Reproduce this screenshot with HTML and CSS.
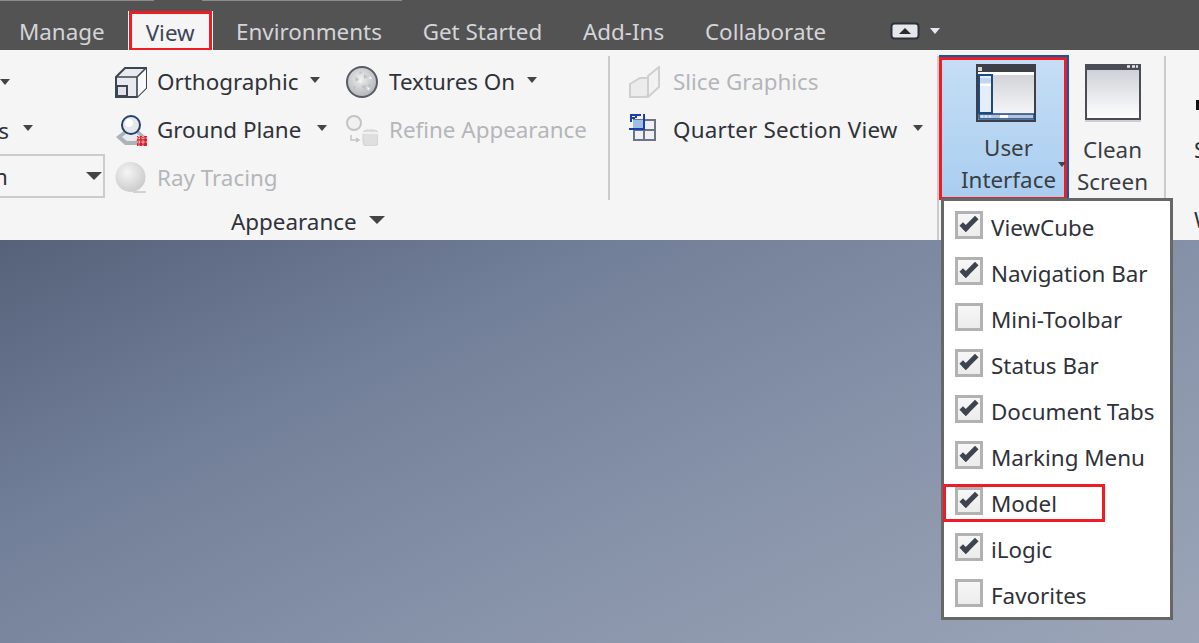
FILE: index.html
```html
<!DOCTYPE html>
<html lang="en">
<head>
<meta charset="utf-8">
<title>User Interface menu</title>
<link rel="stylesheet" href="styles.css">
</head>
<body>
<div class="app">
  <nav class="tabs">
    <span class="tab">Manage</span>
    <span class="tab tab-active">View</span>
    <span class="tab">Environments</span>
    <span class="tab">Get Started</span>
    <span class="tab">Add-Ins</span>
    <span class="tab">Collaborate</span>
    <span class="tab-tool">
      <svg class="pill" viewBox="0 0 30 18"><rect x="1.5" y="1.5" width="27" height="15" rx="3" fill="#e4e6ea" stroke="#2c3038" stroke-width="2"/><path d="M9 12 L15 6 L21 12Z" fill="#2a2a2a"/></svg>
      <i class="arrow arrow-light"></i>
    </span>
  </nav>
  <div class="ribbon">
    <section class="panel-left">
      <div class="clip-row"><i class="arrow"></i></div>
      <div class="clip-row"><span class="label">s</span><i class="arrow arrow-s"></i></div>
      <div class="combo"><span class="label">n</span><i class="arrow arrow-lg"></i></div>
    </section>
    <section class="panel-app">
      <div class="cols">
        <div class="col col-a">
          <div class="row">
            <svg class="ico" viewBox="0 0 32 32"><path d="M1 11 L10 2 H31 V22 L22 31 H1Z" fill="#e8eaee" stroke="#3c4552" stroke-width="2"/><path d="M22 11 L31 2 V22 L22 31Z" fill="#fafafa"/><path d="M1 11 H22 V31 M22 11 L31 2" fill="none" stroke="#3c4552" stroke-width="1.6"/><rect x="2" y="20" width="10" height="10" fill="#dfe2e8" stroke="#3c4552" stroke-width="2"/></svg>
            <span class="label">Orthographic</span><i class="arrow arrow-r"></i>
          </div>
          <div class="row">
            <svg class="ico" viewBox="0 0 32 32"><path d="M1 23 L10 16 H23 L31 23 L22 31 H10Z" fill="#aeb3bb"/><path d="M7 23 L12 19 H21 L26 23 L20 27 H12Z" fill="#e8eaee"/><circle cx="16" cy="11" r="9" fill="#e6e8ec" stroke="#27406e" stroke-width="2"/><circle cx="14" cy="9" r="4" fill="#fff"/><rect x="22" y="22" width="10" height="10" fill="#d8212c"/><path d="M22 24h10M22 28h10M24 22v10M28 22v10" stroke="#fff" stroke-dasharray="1 1.2" stroke-width="1.2"/></svg>
            <span class="label">Ground Plane</span><i class="arrow arrow-r2"></i>
          </div>
          <div class="row">
            <svg class="ico" viewBox="0 0 32 32"><defs><radialGradient id="gl" cx=".4" cy=".35" r=".7"><stop offset="0" stop-color="#f5f5f5"/><stop offset="1" stop-color="#c9c9c9"/></radialGradient></defs><circle cx="15.500" cy="15" r="15" fill="url(#gl)"/><path d="M18 30 H31" stroke="#d2d2d2" stroke-width="2"/></svg>
            <span class="label muted">Ray Tracing</span>
          </div>
        </div>
        <div class="col col-b">
          <div class="row">
            <svg class="ico" viewBox="0 0 32 32"><defs><radialGradient id="tx" cx=".45" cy=".4" r=".7"><stop offset="0" stop-color="#efefef"/><stop offset="1" stop-color="#a9abb0"/></radialGradient></defs><circle cx="16" cy="16" r="15" fill="url(#tx)" stroke="#565b66" stroke-width="2"/><path d="M9 11l4 2-3 3zM18 8l4 3-4 2zM15 20l5-1-1 5zM23 17l2 3-3 1zM7 20l3 1-2 3zM14 5l2 2-3 1z" fill="#bfc0c4"/><path d="M12 16l3-2 1 3zM21 21l3 1-2 3zM24 10l2 3-3 0z" fill="#f7f7f7"/></svg>
            <span class="label">Textures On</span><i class="arrow arrow-r3"></i>
          </div>
          <div class="row">
            <svg class="ico" viewBox="0 0 32 32"><circle cx="8" cy="9" r="7" fill="#f1f1f1" stroke="#c4c4c4" stroke-width="2"/><path d="M5 21 v5 h8 M10 24 l3 2 -3 2" fill="none" stroke="#c4c4c4" stroke-width="1.500"/><rect x="17" y="16" width="15" height="16" rx="4" fill="#dfdfdf" stroke="#d0d0d0"/><path d="M17 19 h15" stroke="#f0f0f0" stroke-width="2"/></svg>
            <span class="label muted">Refine Appearance</span>
          </div>
        </div>
      </div>
      <div class="panel-title"><span class="label">Appearance</span><i class="arrow arrow-lg arrow-title"></i></div>
    </section>
    <div class="sep sep-short"></div>
    <section class="panel-sec">
      <div class="row">
        <svg class="ico" viewBox="0 0 32 32"><path d="M1 18 L11 12 H24 V25 L17 31 H1Z" fill="#ececec" stroke="#cfcfcf" stroke-width="2"/><path d="M19 10 L30 1 V21 L19 31Z" fill="#f2f2f2" stroke="#cfcfcf" stroke-width="2"/></svg>
        <span class="label muted">Slice Graphics</span>
      </div>
      <div class="row">
        <svg class="ico" viewBox="0 0 32 32"><path d="M5 6 H26 V26 H5Z M15 6 V26 M5 16 H26" fill="#eef0f3" stroke="#6c7482" stroke-width="2"/><rect x="4" y="6" width="11" height="10" fill="#9dbfe6"/><path d="M1 1 H12 M7 0 V4 M15 0 V15 M0 15 H16 M2 1 V8 M2 4 H6" fill="none" stroke="#1a3fa8" stroke-width="2"/></svg>
        <span class="label wide">Quarter Section View</span><i class="arrow arrow-r4"></i>
      </div>
    </section>
    <div class="sep sep-tall"></div>
    <button class="big big-on">
      <svg class="big-ico" viewBox="0 0 60 58"><defs><linearGradient id="ui" x1="0" y1="0" x2="0" y2="1"><stop offset="0" stop-color="#cfd1d6"/><stop offset="1" stop-color="#fbfbfc"/></linearGradient></defs><rect width="60" height="58" fill="#3d4048"/><rect x="2" y="8" width="56" height="48" fill="url(#ui)"/><rect x="2" y="8" width="56" height="3" fill="#fff"/><rect x="2" y="3" width="4" height="4" fill="#d8d8d8"/><rect x="3" y="11" width="13" height="38" fill="#e4edf8" stroke="#1d4a80" stroke-width="2"/><rect x="4" y="14" width="11" height="5" fill="#c4d5ef"/><rect x="4" y="20" width="11" height="2" fill="#fff"/><rect x="3" y="50" width="55" height="5" fill="#b7c6de" stroke="#1d4a80" stroke-width="1.500"/><rect x="24" y="51" width="8" height="3" fill="#fff"/><path d="M5 52.500h2M9 52.500h2M13 52.500h2" stroke="#e6edf7" stroke-width="2"/></svg>
      <span class="big-text">User<br>Interface</span>
      <i class="arrow arrow-sm"></i>
    </button>
    <button class="big big-plain">
      <svg class="big-ico big-ico-b" viewBox="0 0 56 58"><defs><linearGradient id="sc" x1="0" y1="0" x2="0" y2="1"><stop offset="0" stop-color="#ced1d8"/><stop offset="1" stop-color="#fff"/></linearGradient></defs><rect width="56" height="56" fill="#4a4d55"/><rect x="2" y="6" width="52" height="48" fill="url(#sc)"/><path d="M42 2.500h3M47 2.500h3M51 2.500h2" stroke="#e8e8e8" stroke-width="2.500"/><rect x="0" y="56" width="56" height="2" fill="#cfcfcf"/></svg>
      <span class="big-text">Clean<br>Screen</span>
    </button>
    <div class="sep sep-end"></div>
    <section class="panel-right">
      <i class="stub"></i>
      <span class="label stub-s">S</span>
      <span class="label stub-w">W</span>
    </section>
  </div>
  <main class="viewport"></main>

  <div class="menu">
    <div class="item"><span class="box on"></span><span class="label">ViewCube</span></div>
    <div class="item"><span class="box on"></span><span class="label">Navigation Bar</span></div>
    <div class="item"><span class="box"></span><span class="label">Mini-Toolbar</span></div>
    <div class="item"><span class="box on"></span><span class="label">Status Bar</span></div>
    <div class="item"><span class="box on"></span><span class="label">Document Tabs</span></div>
    <div class="item"><span class="box on"></span><span class="label">Marking Menu</span></div>
    <div class="item item-mark"><span class="box on"></span><span class="label">Model</span></div>
    <div class="item"><span class="box on"></span><span class="label">iLogic</span></div>
    <div class="item"><span class="box"></span><span class="label">Favorites</span></div>
  </div>
</div>
</body>
</html>
```
FILE: styles.css
```css
*, *::before, *::after { box-sizing: border-box; }
html, body { margin: 0; height: 100%; overflow: hidden; }
body {
  font-family: "Noto Sans", "Open Sans", sans-serif;
  font-size: 22.4px;
  color: #2f3238;
}
.app {
  position: relative;
  width: 1199px;
  height: 643px;
  display: flex;
  flex-direction: column;
  overflow: hidden;
}

/* tab strip */
.tabs {
  height: 50px;
  flex: none;
  display: flex;
  align-items: flex-end;
  background:
    linear-gradient(#8c8c8c, #8c8c8c) 0 0 / 154px 1px no-repeat,
    linear-gradient(#8c8c8c, #8c8c8c) 202px 0 / 200px 1px no-repeat,
    #535353;
  color: #d3d5d8;
}
.tab {
  height: 39px;
  padding: 0 20.4px;
  line-height: 41px;
  white-space: nowrap;
}
.tab:first-child { padding-left: 19px; padding-right: 20px; }
.tab-active {
  margin: 0 4px;
  padding: 0 14px;
  line-height: 37px;
  background: #f5f5f5;
  color: #3d4555;
  border: 3px solid #ee1c25;
  border-bottom-width: 2px;
  box-shadow: 1px 0 0 #fff, -1px 0 0 #fff;
}
.tab-tool {
  display: flex;
  align-items: center;
  gap: 10px;
  height: 39px;
  margin-left: 43px;
}
.pill { width: 30px; height: 18px; }

/* arrows */
.arrow {
  display: inline-block;
  flex: none;
  width: 0;
  height: 0;
  border-left: 5px solid transparent;
  border-right: 5px solid transparent;
  border-top: 6px solid #444;
}
.arrow-light { border-top-color: #e6e8f2; }
.arrow-lg { border-left-width: 8px; border-right-width: 8px; border-top-width: 8px; }
.arrow-s { margin: 0 72px 4px 14px; }
.arrow-r { margin: 0 0 4px 12px; }
.arrow-r2 { margin: 0 0 4px 16px; }
.arrow-r3 { margin: 0 0 4px 12px; }
.arrow-r4 { margin: 0 0 4px 15px; }
.arrow-sm {
  position: absolute;
  right: 1px;
  bottom: 33px;
  border-left-width: 4px;
  border-right-width: 4px;
  border-top-width: 5px;
}
.arrow-title { margin: 0 0 3px 12px; }

/* ribbon */
.ribbon {
  height: 190px;
  flex: none;
  display: flex;
  background: #f5f5f5;
  overflow: hidden;
}
.label { white-space: nowrap; }
.muted { color: #b4b6ba; }
.wide { letter-spacing: .2px; }
.panel-left {
  width: 105px;
  flex: none;
  padding-top: 8px;
  overflow: hidden;
  display: flex;
  flex-direction: column;
}
.clip-row {
  height: 48px;
  display: flex;
  align-items: center;
  justify-content: flex-end;
}
.clip-row:first-child { justify-content: flex-start; }
.combo {
  height: 44px;
  margin-left: -8px;
  display: flex;
  align-items: center;
  justify-content: space-between;
  padding-right: 1px;
  border: 2px solid #cccccc;
  background: #f5f5f5;
}
.panel-app {
  width: 493px;
  margin-left: 10px;
  flex: none;
  padding-top: 8px;
  display: flex;
  flex-direction: column;
}
.cols { display: flex; height: 144px; }
.col { display: flex; flex-direction: column; }
.col-a { width: 231px; }
.row {
  height: 48px;
  display: flex;
  align-items: center;
  white-space: nowrap;
}
.row .label { margin-top: -2px; }
.ico { width: 32px; height: 32px; flex: none; margin-right: 10px; }
.col-b .ico { margin-right: 11px; }
.panel-title {
  height: 28px;
  margin-top: 5px;
  display: flex;
  align-items: center;
  padding-left: 116px;
}
.sep { flex: none; width: 2px; background: #cbcbcb; }
.sep-short { height: 144px; margin-top: 6px; }
.panel-sec {
  width: 327px;
  flex: none;
  padding: 8px 0 0 19px;
}
.panel-sec .ico { margin-right: 12px; }
.sep-tall { height: 190px; margin-top: 6px; }
.sep-end { height: 144px; margin-top: 6px; }

/* large buttons */
.big {
  position: relative;
  flex: none;
  height: 145px;
  margin-top: 5px;
  padding: 0;
  border: 0;
  font: inherit;
  color: #3a3d44;
  text-align: center;
  display: flex;
  flex-direction: column;
  align-items: center;
  background: none;
}
.big-on {
  width: 130px;
  padding: 7px 0 0 6px;
  background: linear-gradient(#c6def5, #a9cdf0);
  border-top: 2px solid #0a5aa8;
  border-right: 2px solid #0a5aa8;
  box-shadow: inset 0 0 0 3px #ee1c25;
}
.big-plain { width: 95px; padding: 9px 8px 0 0; }
.big-ico { width: 60px; height: 58px; flex: none; }
.big-ico-b { width: 56px; }
.big-text { display: block; line-height: 32px; margin-top: 10px; }
.big-on .big-text { margin-left: 5px; }
.big-plain .big-text { margin-top: 12px; }

/* stub at the right edge */
.panel-right { position: relative; flex: 1; padding-left: 30px; }
.stub {
  display: block;
  width: 4px;
  height: 10px;
  margin-top: 50px;
  background: #111;
}
.stub-s, .stub-w { position: absolute; left: 28px; }
.stub-s { top: 84px; }
.stub-w { top: 154px; }

/* viewport */
.viewport {
  flex: 1;
  background: linear-gradient(155deg, #56617a 0%, #727f98 30%, #8793a9 62%, #9ca5b8 100%);
}

/* dropdown */
.menu {
  position: absolute;
  left: 941px;
  top: 198px;
  width: 232px;
  height: 422px;
  padding: 7px 0 0 11px;
  background: #fff;
  border: 3px solid #676767;
}
.item {
  position: relative;
  height: 46px;
  display: flex;
  align-items: flex-start;
  gap: 8px;
}
.box {
  position: relative;
  width: 28px;
  height: 28px;
  flex: none;
  margin-top: 3px;
  border: 3px solid #b2b2b2;
  background: linear-gradient(#f7f7f7, #ececec);
}
.box.on::after {
  content: "";
  position: absolute;
  left: 2px;
  top: 4px;
  width: 18px;
  height: 9px;
  border-left: 5px solid #3d4450;
  border-bottom: 5px solid #3d4450;
  transform: rotate(-45deg);
}
.item .label { line-height: 36px; margin-top: 2px; }
.item-mark::after {
  content: "";
  position: absolute;
  left: -12px;
  top: 0;
  width: 162px;
  height: 38px;
  border: 3px solid #ee1c25;
}
```
